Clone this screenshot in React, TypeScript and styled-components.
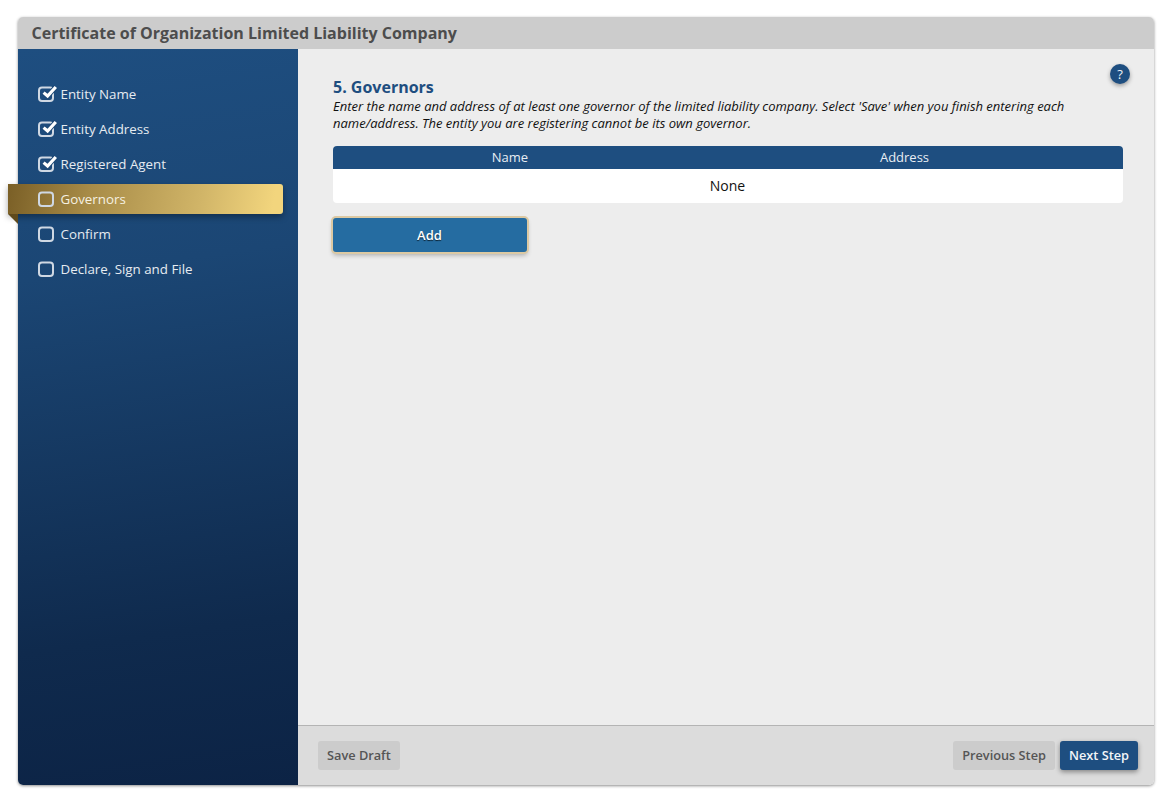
import React from "react";
import styled, { createGlobalStyle } from "styled-components";

const Global = createGlobalStyle`
  html, body { margin: 0; padding: 0; background: #fff; height: 100%; }
  body { font-family: "Open Sans", "Liberation Sans", sans-serif; }
  * { box-sizing: border-box; }
`;

const Page = styled.div`
  width: 1175px;
  height: 801px;
  padding: 17px 21px 16px 18px;
`;

const Card = styled.div`
  height: 768px;
  display: flex;
  flex-direction: column;
  border-radius: 5px;
  box-shadow: 0 1px 3px rgba(0, 0, 0, 0.45);
`;

const Title = styled.div`
  height: 32px;
  flex: none;
  background: #cccccc;
  color: #4d4d4d;
  font-size: 16px;
  font-weight: 700;
  line-height: 32px;
  padding-left: 13.5px;
  border-radius: 5px 5px 0 0;
`;

const Body = styled.div`
  flex: 1;
  min-height: 0;
  display: flex;
`;

const SideWrap = styled.div`
  position: relative;
  width: 280px;
  flex: none;
  padding-top: 30px;
  border-radius: 0 0 0 5px;
  background: linear-gradient(172deg, #1e4e80 0%, #1b4674 30%, #0f2a4d 78%, #0c2345 100%);
`;

const Steps = styled.ul`
  list-style: none;
  margin: 0;
  padding: 0;
  display: flex;
  flex-direction: column;
  gap: 5px;
`;

const Step = styled.li<{ $active?: boolean }>`
  position: relative;
  height: 30px;
  display: flex;
  align-items: center;
  gap: 5.5px;
  padding-left: ${(p) => (p.$active ? "30px" : "20px")};
  margin-left: ${(p) => (p.$active ? "-10px" : "0")};
  margin-right: ${(p) => (p.$active ? "15px" : "0")};
  color: ${(p) => (p.$active ? "#f6f1e2" : "#e6ebf1")};
  font-size: 13.33px;
  border-radius: ${(p) => (p.$active ? "0 3px 3px 0" : "0")};
  background: ${(p) =>
    p.$active ? "linear-gradient(100deg, #7a5f26 0%, #a88c48 30%, #d1b568 70%, #f2d57d 96%)" : "none"};
  box-shadow: ${(p) => (p.$active ? "0 3px 6px rgba(0, 0, 0, 0.35)" : "none")};
`;

const Fold = styled.span`
  position: absolute;
  left: 0;
  top: 30px;
  width: 0;
  height: 0;
  border-top: 10px solid #5f4a1c;
  border-left: 10px solid transparent;
`;

const Check = styled.svg`
  width: 20px;
  height: 20px;
  flex: none;
  margin-right: -3px;
  overflow: visible;
`;

const Main = styled.div`
  flex: 1;
  min-width: 0;
  display: flex;
  flex-direction: column;
`;

const Content = styled.div`
  position: relative;
  flex: 1;
  background: #ededed;
  padding: 27px 31px 0 35px;
`;

const Help = styled.div`
  position: absolute;
  top: 15px;
  right: 24px;
  width: 20px;
  height: 20px;
  border-radius: 50%;
  background: #1e4e80;
  color: #f0f3f6;
  font-size: 13px;
  line-height: 20px;
  text-align: center;
  box-shadow: 0 2px 4px rgba(0, 0, 0, 0.35);
`;

const Heading = styled.h2`
  margin: 0;
  color: #1e4e80;
  font-size: 16px;
  font-weight: 700;
  line-height: 22px;
`;

const Hint = styled.p`
  margin: 0 0 14px;
  color: #111;
  font-size: 13px;
  font-style: italic;
  line-height: 17px;
`;

const Table = styled.div`
  border-radius: 4px;
  overflow: hidden;
  background: #fff;
`;

const THead = styled.div`
  height: 23px;
  display: grid;
  grid-template-columns: 354px 1fr;
  padding-right: 1px;
  background: #1e4e80;
  color: #e8edf3;
  font-size: 13px;
  line-height: 23px;
  text-align: center;
`;

const TBody = styled.div`
  height: 34px;
  padding-right: 1px;
  color: #111;
  font-size: 14px;
  line-height: 34px;
  text-align: center;
`;

const AddButton = styled.button`
  display: block;
  width: 194px;
  height: 34px;
  margin-top: 15px;
  padding: 0 1px 0 0;
  border: 0;
  border-radius: 3px;
  background: #256ca1;
  color: #fff;
  font-family: inherit;
  font-size: 13px;
  font-weight: 600;
  text-shadow: 0 1px 1px rgba(0, 0, 0, 0.7);
  box-shadow: 0 0 0 2px #dcc9a3, 0 3px 5px rgba(0, 0, 0, 0.3);
`;

const Footer = styled.div`
  height: 60px;
  flex: none;
  display: flex;
  align-items: flex-start;
  gap: 5px;
  padding: 15px 16px 0 20px;
  background: #dcdcdc;
  border-top: 1px solid #b4b4b4;
  border-radius: 0 0 5px 0;
`;

const Spacer = styled.div`
  flex: 1;
`;

const FootButton = styled.button<{ $primary?: boolean }>`
  height: 29px;
  padding: 0 9px 1px;
  border: 0;
  border-radius: 3px;
  font-family: inherit;
  font-size: 12.75px;
  font-weight: 600;
  background: ${(p) => (p.$primary ? "#1e4e80" : "#cccccc")};
  color: ${(p) => (p.$primary ? "#f2f5f8" : "#555555")};
  box-shadow: ${(p) => (p.$primary ? "0 2px 5px rgba(0, 0, 0, 0.4)" : "none")};
`;

const Box = ({ done }: { done: boolean }) => (
  <Check viewBox="0 0 20 20" aria-hidden="true">
    <rect x="1" y="3.5" width="14" height="13.5" rx="3" fill="none" stroke="#cfd8e3" strokeWidth="2" />
    {done && (
      <>
        <path d="M5.6 8.6 L9.6 12 L17.8 3" fill="none" stroke="#1c4875" strokeWidth="5" />
        <path d="M5.6 8.6 L9.6 12 L17.8 3" fill="none" stroke="#fff" strokeWidth="3.2" />
      </>
    )}
  </Check>
);

const steps = [
  { label: "Entity Name", done: true },
  { label: "Entity Address", done: true },
  { label: "Registered Agent", done: true },
  { label: "Governors", done: false, active: true },
  { label: "Confirm", done: false },
  { label: "Declare, Sign and File", done: false },
];

export default function App() {
  return (
    <Page>
      <Global />
      <Card>
        <Title>Certificate of Organization Limited Liability Company</Title>
        <Body>
          <SideWrap>
            <Steps>
              {steps.map((s) => (
                <Step key={s.label} $active={s.active}>
                  <Box done={s.done} />
                  {s.label}
                  {s.active && <Fold />}
                </Step>
              ))}
            </Steps>
          </SideWrap>
          <Main>
            <Content>
              <Help>?</Help>
              <Heading>5. Governors</Heading>
              <Hint>
                Enter the name and address of at least one governor of the limited liability company. Select 'Save' when
                you finish entering each name/address. The entity you are registering cannot be its own governor.
              </Hint>
              <Table>
                <THead>
                  <span>Name</span>
                  <span>Address</span>
                </THead>
                <TBody>None</TBody>
              </Table>
              <AddButton>Add</AddButton>
            </Content>
            <Footer>
              <FootButton>Save Draft</FootButton>
              <Spacer />
              <FootButton>Previous Step</FootButton>
              <FootButton $primary>Next Step</FootButton>
            </Footer>
          </Main>
        </Body>
      </Card>
    </Page>
  );
}
